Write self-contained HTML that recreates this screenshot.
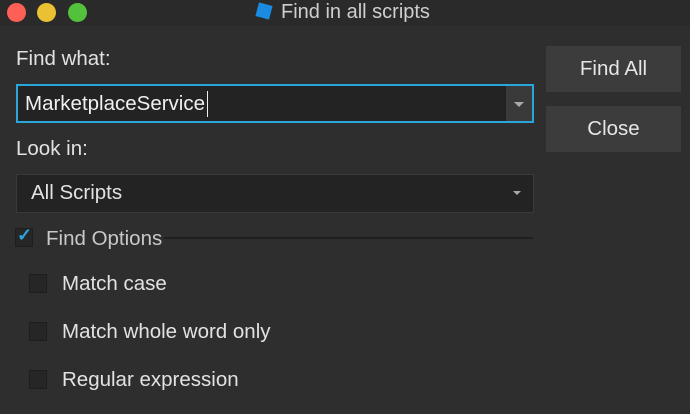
<!DOCTYPE html>
<html><head><style>
body{margin:0;width:690px;height:414px;background:#2e2e2e;font-family:"Liberation Sans",sans-serif;color:#e2e2e2;position:relative;overflow:hidden}
.a{position:absolute}
.t{font-size:20.5px;white-space:nowrap}
.box{background:#232323;border:1px solid #3a3a3a;box-sizing:border-box}
.btn{background:#3c3c3c;box-sizing:border-box;text-align:center;font-size:20.5px;color:#e6e6e6}
.cb{width:18px;height:19px;background:#262626;border:1px solid #1e1e1e;box-sizing:border-box}
</style></head><body>
<div class="a" style="left:0;top:0;width:690px;height:26px;background:#2a2a2a"></div>
<div class="a" style="left:7px;top:3px;width:19px;height:19px;border-radius:50%;background:#fe5f57"></div>
<div class="a" style="left:37px;top:3px;width:19px;height:19px;border-radius:50%;background:#e9c132"></div>
<div class="a" style="left:68px;top:3px;width:19px;height:19px;border-radius:50%;background:#54c13c"></div>
<div class="a" style="left:257px;top:4px;width:14px;height:14px;background:#1a8be0;transform:rotate(15deg)"></div>
<div class="a t" style="left:281px;top:1px;color:#cfcfcf;font-size:20px">Find in all scripts</div>
<div class="a t" style="left:16px;top:47px">Find what:</div>
<div class="a" style="left:16px;top:84px;width:518px;height:39px;border:2px solid #2aa6dc;box-sizing:border-box;background:#232323"></div>
<div class="a" style="left:506px;top:86px;width:26px;height:35px;background:#3a3a3a"></div>
<div class="a" style="left:514px;top:102px;width:0;height:0;border-left:5px solid transparent;border-right:5px solid transparent;border-top:5px solid #aaa"></div>
<div class="a t" style="left:25px;top:92px;color:#f0f0f0">MarketplaceService</div>
<div class="a" style="left:207px;top:91px;width:1px;height:26px;background:#eee"></div>
<div class="a btn" style="left:546px;top:46px;width:135px;height:46px;line-height:46px">Find All</div>
<div class="a btn" style="left:546px;top:106px;width:135px;height:46px;line-height:46px">Close</div>
<div class="a t" style="left:16px;top:137px">Look in:</div>
<div class="a box" style="left:16px;top:174px;width:518px;height:39px"></div>
<div class="a t" style="left:31px;top:181px">All Scripts</div>
<div class="a" style="left:513px;top:191px;width:0;height:0;border-left:4px solid transparent;border-right:4px solid transparent;border-top:4px solid #aaa"></div>
<div class="a cb" style="left:15px;top:228px"></div>
<div class="a" style="left:17px;top:225px;color:#2aa6dc;font-size:18px;font-weight:bold">✓</div>
<div class="a t" style="left:46px;top:227px;color:#c8c8c8">Find Options</div>
<div class="a" style="left:164px;top:237px;width:369px;height:2px;background:#1f1f1f"></div>
<div class="a cb" style="left:29px;top:274px"></div>
<div class="a t" style="left:62px;top:272px">Match case</div>
<div class="a cb" style="left:29px;top:322px"></div>
<div class="a t" style="left:62px;top:320px">Match whole word only</div>
<div class="a cb" style="left:29px;top:370px"></div>
<div class="a t" style="left:62px;top:368px">Regular expression</div>
</body></html>
